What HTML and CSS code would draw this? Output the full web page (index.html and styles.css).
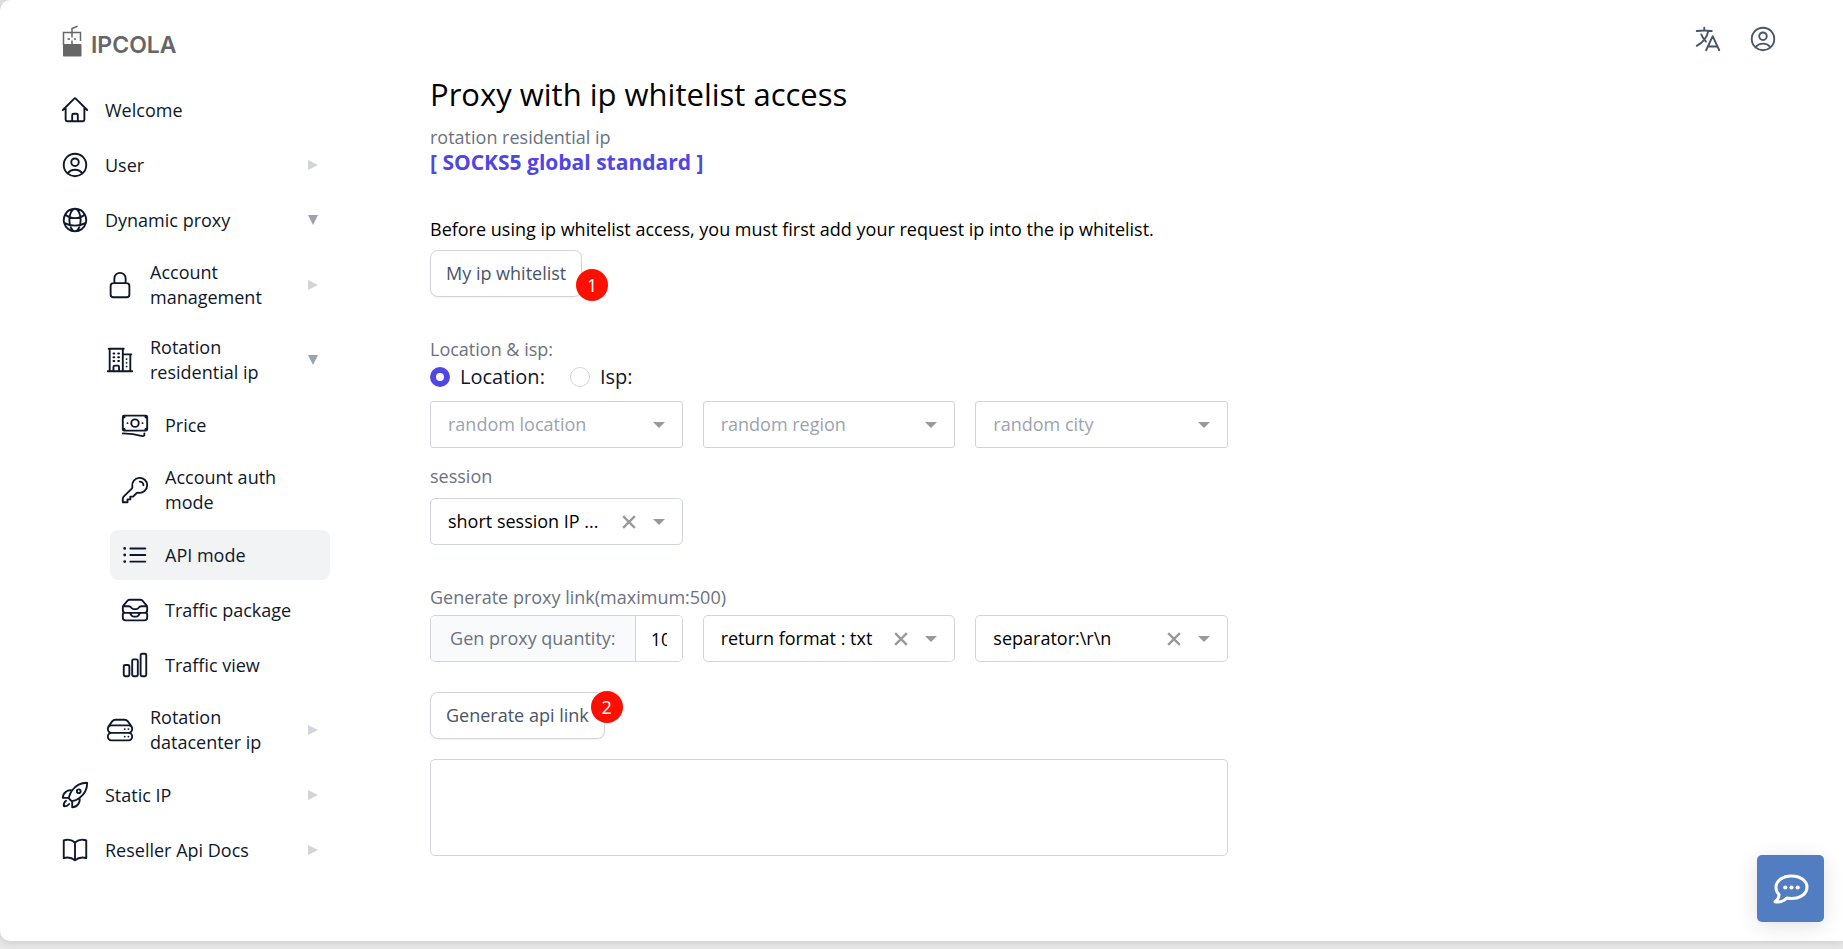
FILE: index.html
```html
<!DOCTYPE html>
<html lang="en">
<head>
<meta charset="utf-8">
<title>IPCOLA - Proxy with ip whitelist access</title>
<link rel="stylesheet" href="styles.css">
</head>
<body>
<div class="card">
  <aside class="sidebar">
    <a class="logo" href="#">
      <svg class="logo-mark" viewBox="0 0 20 32" aria-hidden="true">
        <path d="M1.500 20V7.500H18.500V16M10 12.500V3.500L15.500 1.200M10 19.500V15.500M5.500 14H8M12 14H14" fill="none" stroke="#666" stroke-width="1.500"/>
        <rect x="1" y="19" width="18.500" height="12.500" rx="1" fill="#666"/>
      </svg>
      <span class="logo-name">IPCOLA</span>
    </a>
    <nav>
      <ul class="menu">
        <li><a class="item" href="#">
          <svg class="icon" viewBox="0 0 24 24"><path d="M2.25 12l8.954-8.955c.44-.439 1.152-.439 1.591 0L21.75 12M4.5 9.750v10.125c0 .621.504 1.125 1.125 1.125H9.750v-4.875c0-.621.504-1.125 1.125-1.125h2.250c.621 0 1.125.504 1.125 1.125V21h4.125c.621 0 1.125-.504 1.125-1.125V9.750M8.250 21h8.250"/></svg>
          <span class="label">Welcome</span></a></li>
        <li><a class="item" href="#">
          <svg class="icon" viewBox="0 0 24 24"><path d="M17.982 18.725A7.488 7.488 0 0012 15.750a7.488 7.488 0 00-5.982 2.975m11.963 0a9 9 0 10-11.963 0m11.963 0A8.966 8.966 0 0112 21a8.966 8.966 0 01-5.982-2.275M15 9.750a3 3 0 11-6 0 3 3 0 016 0z"/></svg>
          <span class="label">User</span><svg class="arrow" viewBox="0 0 10 10"><path d="M0 0L10 5L0 10z"/></svg></a></li>
        <li><a class="item" href="#">
          <svg class="icon" viewBox="0 0 24 24"><path d="M12 21a9.004 9.004 0 008.716-6.747M12 21a9.004 9.004 0 01-8.716-6.747M12 21c2.485 0 4.500-4.030 4.500-9S14.485 3 12 3m0 18c-2.485 0-4.500-4.030-4.500-9S9.515 3 12 3m0 0a8.997 8.997 0 017.843 4.582M12 3a8.997 8.997 0 00-7.843 4.582m15.686 0A11.953 11.953 0 0112 10.500c-2.998 0-5.740-1.100-7.843-2.918m15.686 0A8.959 8.959 0 0121 12c0 .778-.099 1.533-.284 2.253m0 0A17.919 17.919 0 0112 16.500c-3.162 0-6.133-.815-8.716-2.247m0 0A9.015 9.015 0 013 12c0-1.605.420-3.113 1.157-4.418"/></svg>
          <span class="label">Dynamic proxy</span><svg class="arrow open" viewBox="0 0 10 10"><path d="M0 0H10L5 10z"/></svg></a>
          <ul class="menu level-2">
            <li><a class="item" href="#">
              <svg class="icon" viewBox="0 0 24 24"><path d="M16.500 10.500V6.750a4.500 4.500 0 10-9 0v3.750m-.750 11.250h10.500a2.250 2.250 0 002.250-2.250v-6.750a2.250 2.250 0 00-2.250-2.250H6.750a2.250 2.250 0 00-2.250 2.250v6.750a2.250 2.250 0 002.250 2.250z"/></svg>
              <span class="label">Account management</span><svg class="arrow" viewBox="0 0 10 10"><path d="M0 0L10 5L0 10z"/></svg></a></li>
            <li><a class="item" href="#">
              <svg class="icon" viewBox="0 0 24 24"><path d="M2.250 21h19.500m-18-18v18m10.500-18v18m6-13.500V21M6.750 6.750h.750m-.750 3h.750m-.750 3h.750m3-6h.750m-.750 3h.750m-.750 3h.750M6.750 21v-3.375c0-.621.504-1.125 1.125-1.125h2.250c.621 0 1.125.504 1.125 1.125V21M3 3h12m-.750 4.500H21m-3.750 3.750h.008v.008h-.008v-.008zm0 3h.008v.008h-.008v-.008zm0 3h.008v.008h-.008v-.008z"/></svg>
              <span class="label">Rotation residential ip</span><svg class="arrow open" viewBox="0 0 10 10"><path d="M0 0H10L5 10z"/></svg></a>
              <ul class="menu level-3">
                <li><a class="item" href="#">
                  <svg class="icon" viewBox="0 0 24 24"><path d="M2.250 18.750a60.070 60.070 0 0115.797 2.101c.727.198 1.453-.342 1.453-1.096V18.750M3.750 4.500v.750A.750.750 0 013 6h-.750m0 0v-.375c0-.621.504-1.125 1.125-1.125H20.250M2.250 6v9m18-10.500v.750c0 .414.336.750.750.750h.750m-1.500-1.500h.375c.621 0 1.125.504 1.125 1.125v9.750c0 .621-.504 1.125-1.125 1.125h-.375m1.500-1.500H21a.750.750 0 00-.750.750v.750m0 0H3.750m0 0h-.375a1.125 1.125 0 01-1.125-1.125V15m1.500 1.500v-.750A.750.750 0 003 15h-.750M15 10.500a3 3 0 11-6 0 3 3 0 016 0zm3 0h.008v.008H18V10.500zm-12 0h.008v.008H6V10.500z"/></svg>
                  <span class="label">Price</span></a></li>
                <li><a class="item" href="#">
                  <svg class="icon" viewBox="0 0 24 24"><path d="M15.750 5.250a3 3 0 013 3m3 0a6 6 0 01-7.029 5.912c-.563-.097-1.159.026-1.563.430L10.500 17.250H8.250v2.250H6v2.250H2.250v-2.818c0-.597.237-1.170.659-1.591l6.499-6.499c.404-.404.527-1 .430-1.563A6 6 0 1121.750 8.250z"/></svg>
                  <span class="label">Account auth mode</span></a></li>
                <li><a class="item active" href="#" aria-current="page">
                  <svg class="icon" viewBox="0 0 24 24"><path d="M8.250 6.750h12M8.250 12h12m-12 5.250h12M3.750 6.750h.007v.008H3.750V6.750zm.375 0a.375.375 0 11-.750 0 .375.375 0 01.750 0zM3.750 12h.007v.008H3.750V12zm.375 0a.375.375 0 11-.750 0 .375.375 0 01.750 0zm-.375 5.250h.007v.008H3.750v-.008zm.375 0a.375.375 0 11-.750 0 .375.375 0 01.750 0z"/></svg>
                  <span class="label">API mode</span></a></li>
                <li><a class="item" href="#">
                  <svg class="icon" viewBox="0 0 24 24"><path d="M7.875 14.250l1.214 1.942a2.250 2.250 0 001.908 1.058h2.006c.776 0 1.497-.400 1.908-1.058l1.214-1.942M2.410 9h4.636a2.250 2.250 0 011.872 1.002l.164.246a2.250 2.250 0 001.872 1.002h2.092a2.250 2.250 0 001.872-1.002l.164-.246A2.250 2.250 0 0116.954 9h4.636M2.410 9a2.250 2.250 0 00-.160.832V12a2.250 2.250 0 002.250 2.250h15A2.250 2.250 0 0021.750 12V9.832c0-.287-.055-.570-.160-.832M2.410 9a2.250 2.250 0 01.382-.632l3.285-3.832a2.250 2.250 0 011.708-.786h8.430c.657 0 1.281.287 1.709.786l3.284 3.832c.163.190.291.404.382.632M4.500 20.250h15A2.250 2.250 0 0021.750 18v-2.625c0-.621-.504-1.125-1.125-1.125H3.375c-.621 0-1.125.504-1.125 1.125V18a2.250 2.250 0 002.250 2.250z"/></svg>
                  <span class="label">Traffic package</span></a></li>
                <li><a class="item" href="#">
                  <svg class="icon" viewBox="0 0 24 24"><path d="M3 13.125C3 12.504 3.504 12 4.125 12h2.250c.621 0 1.125.504 1.125 1.125v6.750C7.500 20.496 6.996 21 6.375 21h-2.250A1.125 1.125 0 013 19.875v-6.750zM9.750 8.625c0-.621.504-1.125 1.125-1.125h2.250c.621 0 1.125.504 1.125 1.125v11.250c0 .621-.504 1.125-1.125 1.125h-2.250a1.125 1.125 0 01-1.125-1.125V8.625zM16.500 4.125c0-.621.504-1.125 1.125-1.125h2.250C20.496 3 21 3.504 21 4.125v15.750c0 .621-.504 1.125-1.125 1.125h-2.250a1.125 1.125 0 01-1.125-1.125V4.125z"/></svg>
                  <span class="label">Traffic view</span></a></li>
              </ul>
            </li>
            <li><a class="item" href="#">
              <svg class="icon" viewBox="0 0 24 24"><path d="M5.250 14.250h13.500m-13.500 0a3 3 0 01-3-3m3 3a3 3 0 100 6h13.500a3 3 0 100-6m-16.500-3a3 3 0 013-3h13.500a3 3 0 013 3m-19.500 0a4.500 4.500 0 01.900-2.700L5.737 5.100a3.375 3.375 0 012.700-1.350h7.126c1.062 0 2.062.500 2.700 1.350l2.587 3.450a4.500 4.500 0 01.900 2.700m0 0a3 3 0 01-3 3m0 3h.008v.008h-.008v-.008zm0-6h.008v.008h-.008v-.008zm-3 6h.008v.008h-.008v-.008zm0-6h.008v.008h-.008v-.008z"/></svg>
              <span class="label">Rotation datacenter ip</span><svg class="arrow" viewBox="0 0 10 10"><path d="M0 0L10 5L0 10z"/></svg></a></li>
          </ul>
        </li>
        <li><a class="item" href="#">
          <svg class="icon" viewBox="0 0 24 24"><path d="M15.590 14.370a6 6 0 01-5.840 7.380v-4.800m5.840-2.580a14.980 14.980 0 006.160-12.120A14.980 14.980 0 009.631 8.410m5.960 5.960a14.926 14.926 0 01-5.841 2.580m-.119-8.540a6 6 0 00-7.381 5.840h4.800m2.581-5.840a14.927 14.927 0 00-2.580 5.840m2.699 2.700c-.103.021-.207.041-.311.060a15.090 15.090 0 01-2.448-2.448 14.900 14.900 0 01.060-.312m-2.240 2.390a4.493 4.493 0 00-1.757 4.306 4.493 4.493 0 004.306-1.758M16.500 9a1.500 1.500 0 11-3 0 1.500 1.500 0 013 0z"/></svg>
          <span class="label">Static IP</span><svg class="arrow" viewBox="0 0 10 10"><path d="M0 0L10 5L0 10z"/></svg></a></li>
        <li><a class="item" href="#">
          <svg class="icon" viewBox="0 0 24 24"><path d="M12 6.042A8.967 8.967 0 006 3.750c-1.052 0-2.062.180-3 .512v14.250A8.987 8.987 0 016 18c2.305 0 4.408.867 6 2.292m0-14.250a8.966 8.966 0 016-2.292c1.052 0 2.062.180 3 .512v14.250A8.987 8.987 0 0018 18a8.967 8.967 0 00-6 2.292m0-14.250v14.250"/></svg>
          <span class="label">Reseller Api Docs</span><svg class="arrow" viewBox="0 0 10 10"><path d="M0 0L10 5L0 10z"/></svg></a></li>
      </ul>
    </nav>
  </aside>

  <div class="page">
    <header class="topbar">
      <button class="icon-button" type="button" aria-label="Language">
        <svg class="icon" viewBox="0 0 24 24"><path d="M10.500 21l5.250-11.250L21 21m-9-3h7.500M3 5.621a48.474 48.474 0 016-.371m0 0c1.120 0 2.233.038 3.334.114M9 5.250V3m3.334 2.364C11.176 10.658 7.690 15.080 3 17.502m9.334-12.138c.896.061 1.785.147 2.666.257m-4.589 8.495a18.023 18.023 0 01-3.827-5.802"/></svg>
      </button>
      <button class="icon-button" type="button" aria-label="Account">
        <svg class="icon" viewBox="0 0 24 24"><path d="M17.982 18.725A7.488 7.488 0 0012 15.750a7.488 7.488 0 00-5.982 2.975m11.963 0a9 9 0 10-11.963 0m11.963 0A8.966 8.966 0 0112 21a8.966 8.966 0 01-5.982-2.275M15 9.750a3 3 0 11-6 0 3 3 0 016 0z"/></svg>
      </button>
    </header>

    <main class="content">
      <section class="intro">
        <h1>Proxy with ip whitelist access</h1>
        <p class="muted">rotation residential ip</p>
        <p class="standard">[ SOCKS5 global standard ]</p>
      </section>

      <section class="whitelist">
        <p>Before using ip whitelist access, you must first add your request ip into the ip whitelist.</p>
        <div class="step">
          <button class="button" type="button">My ip whitelist</button>
          <span class="badge badge-low">1</span>
        </div>
      </section>

      <form>
        <section class="location">
          <p class="muted">Location &amp; isp:</p>
          <div class="radios">
            <label class="radio"><input type="radio" name="target" checked>Location:</label>
            <label class="radio"><input type="radio" name="target">Isp:</label>
          </div>
          <div class="fields">
            <div class="field square">
              <select class="placeholder" aria-label="Location"><option>random location</option></select>
              <svg class="caret" viewBox="0 0 12 6"><path d="M0 0H12L6 6z"/></svg>
            </div>
            <div class="field square">
              <select class="placeholder" aria-label="Region"><option>random region</option></select>
              <svg class="caret" viewBox="0 0 12 6"><path d="M0 0H12L6 6z"/></svg>
            </div>
            <div class="field square">
              <select class="placeholder" aria-label="City"><option>random city</option></select>
              <svg class="caret" viewBox="0 0 12 6"><path d="M0 0H12L6 6z"/></svg>
            </div>
          </div>
        </section>

        <section class="session">
          <label class="muted" for="session">session</label>
          <div class="fields">
            <div class="field">
              <select id="session"><option>short session IP ...</option></select>
              <button class="clear" type="button" aria-label="Clear session"><svg viewBox="0 0 12 12"><path d="M1 1L11 11M11 1L1 11"/></svg></button>
              <svg class="caret" viewBox="0 0 12 6"><path d="M0 0H12L6 6z"/></svg>
            </div>
          </div>
        </section>

        <section class="generate">
          <p class="muted">Generate proxy link(maximum:500)</p>
          <div class="fields">
            <div class="field quantity">
              <label for="quantity">Gen proxy quantity:</label>
              <input id="quantity" type="text" inputmode="numeric" value="10">
            </div>
            <div class="field">
              <select aria-label="Return format"><option>return format : txt</option></select>
              <button class="clear" type="button" aria-label="Clear format"><svg viewBox="0 0 12 12"><path d="M1 1L11 11M11 1L1 11"/></svg></button>
              <svg class="caret" viewBox="0 0 12 6"><path d="M0 0H12L6 6z"/></svg>
            </div>
            <div class="field">
              <select aria-label="Separator"><option>separator:\r\n</option></select>
              <button class="clear" type="button" aria-label="Clear separator"><svg viewBox="0 0 12 12"><path d="M1 1L11 11M11 1L1 11"/></svg></button>
              <svg class="caret" viewBox="0 0 12 6"><path d="M0 0H12L6 6z"/></svg>
            </div>
          </div>
        </section>

        <div class="step">
          <button class="button" type="button">Generate api link</button>
          <span class="badge badge-high">2</span>
        </div>
        <textarea class="result" aria-label="Api link" rows="3"></textarea>
      </form>
    </main>
  </div>
</div>

<button class="chat" type="button" aria-label="Chat">
  <svg viewBox="0 0 36 30"><path d="M18.500 2C27.500 2 34 6.800 34 13.200S27.500 24.500 18.500 24.500C16.800 24.500 15.200 24.300 13.800 24C11 27 6.500 28.500 2 27.800C4.500 26 6 23.500 6 20.500C4 18.500 3 16 3 13.200C3 6.800 9.500 2 18.500 2Z" fill="none" stroke="#fff" stroke-width="3" stroke-linejoin="round"/><circle cx="12.300" cy="13.500" r="2.100" fill="#fff"/><circle cx="18.500" cy="13.500" r="2.100" fill="#fff"/><circle cx="24.700" cy="13.500" r="2.100" fill="#fff"/></svg>
</button>
</body>
</html>
```
FILE: styles.css
```css
* {
  box-sizing: border-box;
}

body {
  margin: 0;
  padding-bottom: 8px;
  min-height: 100vh;
  display: flex;
  background: #e7e7e7;
  color: #000;
  font: 18px/25px "Open Sans", "Noto Sans", sans-serif;
}

h1,
p,
ul {
  margin: 0;
  padding: 0;
}

button,
input,
select,
textarea {
  font: inherit;
  color: inherit;
}

button {
  cursor: pointer;
}

.card {
  flex: 1;
  display: flex;
  background: #fff;
  border-radius: 10px 0 0 10px;
  box-shadow: 0 0 10px rgba(0, 0, 0, 0.16);
}

/* Sidebar */

.sidebar {
  width: 380px;
  flex: none;
  padding: 25px 50px 25px;
}

.logo {
  display: flex;
  align-items: flex-start;
  gap: 9px;
  height: 40px;
  margin: 0 0 20px 12px;
  color: #666;
  font: 600 23px/30px Inter, sans-serif;
  text-decoration: none;
}

.logo-mark {
  flex: none;
  width: 20px;
  height: 32px;
}

.logo-name {
  padding-top: 5px;
}

.menu {
  display: flex;
  flex-direction: column;
  gap: 5px;
  list-style: none;
}

.level-2 {
  margin: 5px 0 0 45px;
}

.level-3 {
  margin: 5px 0 0 15px;
}

.item {
  display: flex;
  align-items: center;
  gap: 15px;
  padding: 10px;
  border-radius: 8px;
  color: #0f172a;
  text-decoration: none;
}

.item.active {
  background: #f1f3f5;
}

.icon {
  display: block;
  flex: none;
  width: 30px;
  height: 30px;
  fill: none;
  stroke: currentColor;
  stroke-width: 1.5;
  stroke-linecap: round;
  stroke-linejoin: round;
}

.label {
  flex: 1;
}

.arrow {
  flex: none;
  width: 10px;
  height: 10px;
  margin-right: 2px;
  fill: #d1d5db;
}

.arrow.open {
  fill: #9ca3af;
}

/* Page */

.page {
  flex: 1;
  padding: 24px 65px 25px 50px;
}

.topbar {
  display: flex;
  justify-content: flex-end;
  gap: 25px;
  color: #475569;
}

.icon-button {
  padding: 0;
  border: 0;
  background: none;
}

.content {
  max-width: 798px;
  padding-top: 18px;
}

h1 {
  margin-bottom: 8px;
  font-size: 31px;
  font-weight: 400;
  line-height: 45px;
}

.muted {
  display: block;
  color: #6b7280;
}

.standard {
  color: #4f46e5;
  font-size: 21px;
  font-weight: 700;
}

.intro {
  margin-bottom: 42px;
}

.whitelist {
  margin-bottom: 40px;
}

.whitelist p {
  margin-bottom: 8px;
}

.step {
  display: flex;
}

.button {
  height: 47px;
  padding: 0 15px;
  border: 1px solid #d1d5db;
  border-radius: 8px;
  background: #fff;
  color: #475569;
  box-shadow: 0 1px 2px rgba(0, 0, 0, 0.06);
}

.badge {
  position: relative;
  width: 32px;
  height: 32px;
  border-radius: 50%;
  background: #ff0f00;
  color: #fff;
  line-height: 32px;
  text-align: center;
}

.badge-low {
  top: 19px;
  left: -6px;
}

.badge-high {
  top: -1px;
  left: -14px;
}

.radios {
  display: flex;
  gap: 25px;
  margin-bottom: 12px;
  padding-top: 2px;
}

.radio {
  display: flex;
  align-items: center;
  gap: 10px;
  color: #0f172a;
  font-size: 20px;
}

.radio input {
  appearance: none;
  width: 20px;
  height: 20px;
  margin: 0;
  border: 1px solid #d1d5db;
  border-radius: 50%;
  background: #fff;
}

.radio input:checked {
  border: 6px solid #4f46e5;
}

.fields {
  display: grid;
  grid-template-columns: repeat(3, 1fr);
  gap: 20px;
}

.field {
  display: flex;
  align-items: center;
  height: 47px;
  min-width: 0;
  padding-right: 17px;
  border: 1px solid #d1d5db;
  border-radius: 5px;
}

.field.square {
  border-radius: 3px;
}

.field select {
  appearance: none;
  flex: 1;
  min-width: 0;
  height: 100%;
  padding: 0 0 0 17px;
  border: 0;
  background: none;
}

.field .placeholder {
  color: #9ca3af;
}

.caret {
  width: 12px;
  height: 6px;
  fill: #999;
}

.clear {
  width: 14px;
  height: 14px;
  margin-right: 17px;
  padding: 0;
  border: 0;
  background: none;
}

.clear svg {
  display: block;
  fill: none;
  stroke: #999;
  stroke-width: 2;
}

.location {
  margin-bottom: 16px;
}

.session {
  margin-bottom: 40px;
}

.session .muted {
  margin-bottom: 9px;
}

.generate {
  margin-bottom: 30px;
}

.generate .muted {
  margin-bottom: 5px;
}

.quantity {
  padding: 0;
  overflow: hidden;
}

.quantity label {
  flex: 1;
  height: 100%;
  border-right: 1px solid #d1d5db;
  background: #f8fafc;
  color: #6b7280;
  line-height: 45px;
  text-align: center;
  white-space: nowrap;
}

.quantity input {
  flex: none;
  width: 46px;
  height: 100%;
  padding: 0 15px;
  border: 0;
  background: #fff;
}

.result {
  display: block;
  width: 100%;
  margin-top: 20px;
  padding: 10px 15px;
  border: 1px solid #d1d5db;
  border-radius: 5px;
  background: #fff;
  resize: none;
}

/* Chat launcher */

.chat {
  position: fixed;
  right: 19px;
  bottom: 27px;
  display: grid;
  place-items: center;
  width: 67px;
  height: 67px;
  padding: 0;
  border: 0;
  border-radius: 5px;
  background: #527dc1;
  box-shadow: 0 4px 20px rgba(0, 0, 0, 0.12);
}

.chat svg {
  width: 36px;
  height: 30px;
}
```
